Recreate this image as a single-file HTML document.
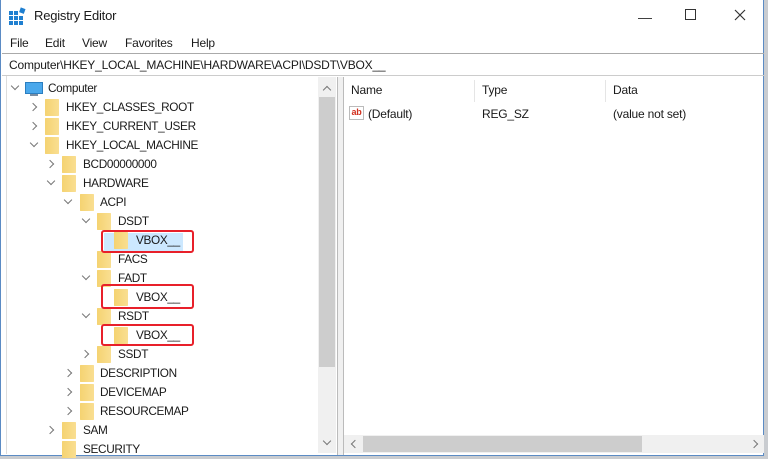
<!DOCTYPE html>
<html><head><meta charset="utf-8"><style>
*{margin:0;padding:0;box-sizing:border-box}
body{width:768px;height:459px;background:#c9ccd0;position:relative;overflow:hidden;font-family:"Liberation Sans",sans-serif;font-size:12px;letter-spacing:-0.2px;color:#1a1a1a}
.win{position:absolute;left:0;top:0;width:764px;height:456px;background:#fff;border:1px solid #5b8bc4;border-top:none}
.a{position:absolute;white-space:nowrap}
.t .a{font-size:11.8px;letter-spacing:-0.35px}
.fold{position:absolute;width:14px;height:17px;background:#f7d87c;border-radius:1px}
.fold:after{content:"";position:absolute;left:0;top:0;width:14px;height:17px;background:linear-gradient(90deg,#f3cf6a 0,#fbe3a0 100%);opacity:.6}
.cr,.cd{position:absolute;width:6px;height:6px;border-right:1.3px solid #777;border-bottom:1.3px solid #777}
.cr{transform:rotate(-45deg)}
.cd{transform:rotate(45deg)}
.red{position:absolute;border:2px solid #e8202a;border-radius:3px}
</style></head><body>
<div class="win">
<svg class="a" style="left:8px;top:7px" width="18" height="18" viewBox="0 0 18 18"><g fill="#1f7fd0"><rect x="0" y="4" width="4" height="4"/><rect x="5" y="4" width="4" height="4"/><rect x="0" y="9" width="4" height="4"/><rect x="5" y="9" width="4" height="4"/><rect x="10" y="9" width="4" height="4"/><rect x="0" y="14" width="4" height="4"/><rect x="5" y="14" width="4" height="4"/><rect x="10" y="14" width="4" height="4"/><rect x="11" y="1" width="5" height="5" transform="rotate(20 13 3)"/></g></svg>
<div class="a" style="left:33px;top:8px;font-size:13px">Registry Editor</div>
<div class="a" style="left:637px;top:9px;font-size:14px;color:#333">—</div>
<div class="a" style="left:684px;top:9px;width:11px;height:11px;border:1.3px solid #333"></div>
<svg class="a" style="left:733px;top:9px" width="12" height="12"><path d="M1 1L11 11M11 1L1 11" stroke="#333" stroke-width="1.2"/></svg>
<div class="a" style="left:9px;top:36px">File</div>
<div class="a" style="left:44px;top:36px">Edit</div>
<div class="a" style="left:81px;top:36px">View</div>
<div class="a" style="left:124px;top:36px">Favorites</div>
<div class="a" style="left:190px;top:36px">Help</div>
<div class="a" style="left:1px;top:53px;width:762px;height:23px;border-top:1px solid #aaa;border-bottom:1px solid #ccc"></div>
<div class="a" style="left:8px;top:58px">Computer\HKEY_LOCAL_MACHINE\HARDWARE\ACPI\DSDT\VBOX__</div>
<div class="a" style="left:5px;top:76px;width:331px;height:378px;border-left:1px solid #ddd"></div>
<div class="a" style="left:317px;top:77px;width:18px;height:376px;background:#f0f0f0"></div>
<div class="a" style="left:318px;top:97px;width:16px;height:270px;background:#cdcdcd"></div>
<div class="cd" style="left:323px;top:87px;transform:rotate(225deg)"></div>
<div class="cd" style="left:323px;top:438px"></div>
<div class="a" style="left:336px;top:77px;width:7px;height:378px;background:#f0f0f0;border-left:1px solid #bbb;border-right:1px solid #bbb"></div>
<div class="a" style="left:343px;top:435px;width:420px;height:18px;background:#f0f0f0"></div>
<div class="a" style="left:362px;top:436px;width:279px;height:16px;background:#cdcdcd"></div>
<div class="cr" style="left:351px;top:441px;transform:rotate(135deg)"></div>
<div class="cr" style="left:750px;top:441px"></div>
<div class="a" style="left:473px;top:80px;width:1px;height:22px;background:#e5e5e5"></div>
<div class="a" style="left:604px;top:80px;width:1px;height:22px;background:#e5e5e5"></div>
<div class="a" style="left:350px;top:83px">Name</div>
<div class="a" style="left:481px;top:83px">Type</div>
<div class="a" style="left:612px;top:83px">Data</div>
<div class="a" style="left:348px;top:106px;width:15px;height:14px;border:1px solid #bbb;background:#fff;font-size:9px;color:#d2301e;font-weight:bold;line-height:11px;text-align:center">ab</div>
<div class="a" style="left:367px;top:107px">(Default)</div>
<div class="a" style="left:481px;top:107px">REG_SZ</div>
<div class="a" style="left:612px;top:107px">(value not set)</div>

<div class="a" style="left:103px;top:233px;width:79px;height:19px;background:#cce8ff"></div>
<div class="t">
<div class="cd" style="left:11px;top:83px"></div>
<div class="a" style="left:24px;top:82px;width:18px;height:12px;background:#4aa8ec;border:1px solid #2b7ec0"></div>
<div class="a" style="left:29px;top:94px;width:8px;height:2px;background:#7a8ea3"></div>
<div class="a" style="left:47px;top:81px">Computer</div>
<div class="cr" style="left:29px;top:104px"></div><div class="fold" style="left:44px;top:99px"></div><div class="a" style="left:65px;top:100px">HKEY_CLASSES_ROOT</div>
<div class="cr" style="left:29px;top:123px"></div><div class="fold" style="left:44px;top:118px"></div><div class="a" style="left:65px;top:119px">HKEY_CURRENT_USER</div>
<div class="cd" style="left:30px;top:140px"></div><div class="fold" style="left:44px;top:137px"></div><div class="a" style="left:65px;top:138px">HKEY_LOCAL_MACHINE</div>
<div class="cr" style="left:46px;top:161px"></div><div class="fold" style="left:61px;top:156px"></div><div class="a" style="left:82px;top:157px">BCD00000000</div>
<div class="cd" style="left:47px;top:178px"></div><div class="fold" style="left:61px;top:175px"></div><div class="a" style="left:82px;top:176px">HARDWARE</div>
<div class="cd" style="left:64px;top:197px"></div><div class="fold" style="left:79px;top:194px"></div><div class="a" style="left:99px;top:195px">ACPI</div>
<div class="cd" style="left:82px;top:216px"></div><div class="fold" style="left:96px;top:213px"></div><div class="a" style="left:117px;top:214px">DSDT</div>
<div class="fold" style="left:113px;top:232px"></div><div class="a" style="left:135px;top:233px">VBOX__</div>
<div class="fold" style="left:96px;top:251px"></div><div class="a" style="left:117px;top:252px">FACS</div>
<div class="cd" style="left:82px;top:273px"></div><div class="fold" style="left:96px;top:270px"></div><div class="a" style="left:117px;top:271px">FADT</div>
<div class="fold" style="left:113px;top:289px"></div><div class="a" style="left:135px;top:290px">VBOX__</div>
<div class="cd" style="left:82px;top:311px"></div><div class="fold" style="left:96px;top:308px"></div><div class="a" style="left:117px;top:309px">RSDT</div>
<div class="fold" style="left:113px;top:327px"></div><div class="a" style="left:135px;top:328px">VBOX__</div>
<div class="cr" style="left:81px;top:351px"></div><div class="fold" style="left:96px;top:346px"></div><div class="a" style="left:117px;top:347px">SSDT</div>
<div class="cr" style="left:64px;top:370px"></div><div class="fold" style="left:79px;top:365px"></div><div class="a" style="left:99px;top:366px">DESCRIPTION</div>
<div class="cr" style="left:64px;top:389px"></div><div class="fold" style="left:79px;top:384px"></div><div class="a" style="left:99px;top:385px">DEVICEMAP</div>
<div class="cr" style="left:64px;top:408px"></div><div class="fold" style="left:79px;top:403px"></div><div class="a" style="left:99px;top:404px">RESOURCEMAP</div>
<div class="cr" style="left:46px;top:427px"></div><div class="fold" style="left:61px;top:422px"></div><div class="a" style="left:82px;top:423px">SAM</div>
<div class="fold" style="left:61px;top:441px"></div><div class="a" style="left:82px;top:442px">SECURITY</div>
</div>
<div class="red" style="left:100px;top:230px;width:93px;height:23px"></div>
<div class="red" style="left:100px;top:284px;width:93px;height:25px"></div>
<div class="red" style="left:100px;top:324px;width:93px;height:22px"></div>
</div>
</body></html>
